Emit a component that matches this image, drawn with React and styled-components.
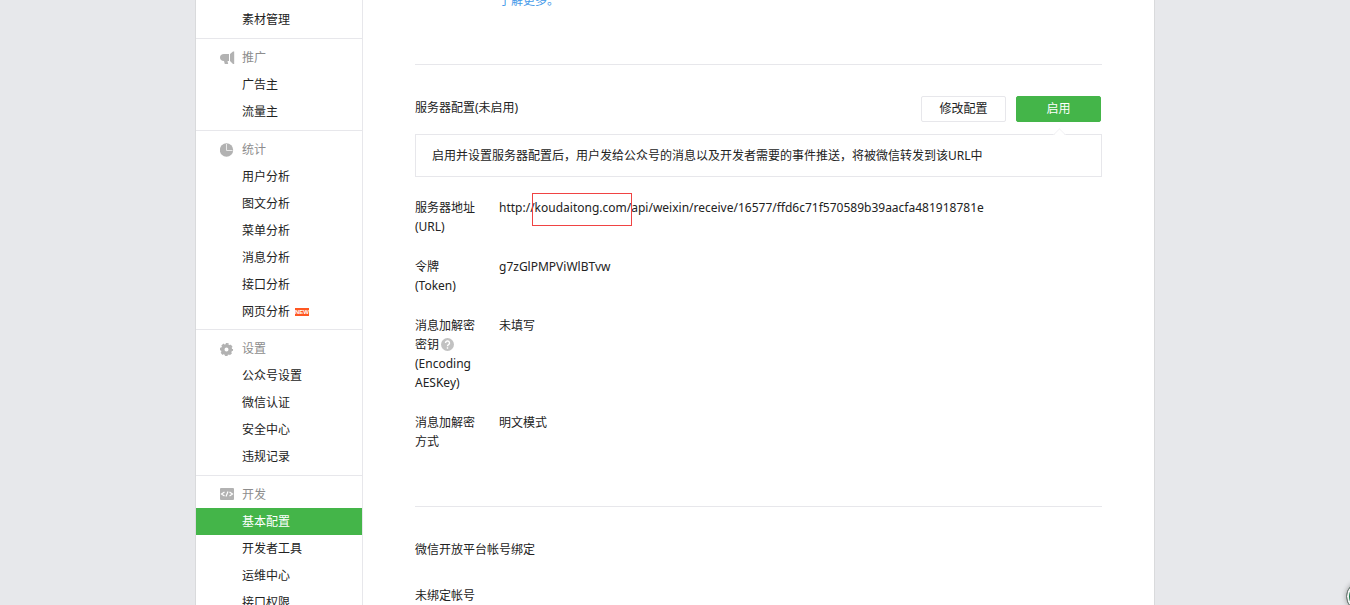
import React from 'react'
import styled, { createGlobalStyle } from 'styled-components'

const GlobalStyle = createGlobalStyle`
    *{
        box-sizing: border-box;
    }
    body{
        margin: 0;
        background: #e7e8eb;
        color: #222;
        font-family: 'Noto Sans', 'Noto Sans CJK SC', sans-serif;
        font-size: 12px;
        line-height: 19px;
    }
    a{
        color: inherit;
        text-decoration: none;
    }
`;

const Page = styled.div`
    height: 100vh;
    overflow: hidden;
    display: flex;
    justify-content: center;
`;

const Container = styled.div`
    display: flex;
    width: 100%;
    max-width: 960px;
    background: #fff;
    border: 1px solid #d9dadc;
    border-width: 0 1px;
`;

const Sidebar = styled.nav`
    flex: 0 0 167px;
    border-right: 1px solid #e7e7eb;
`;

const MenuGroup = styled.section`
    padding: 5px 0 ${props => props.$bottom || 5}px;
    & + &{
        border-top: 1px solid #e7e7eb;
    }
    &:first-child{
        padding-top: 6px;
    }
`;

const MenuTitle = styled.h3`
    display: flex;
    align-items: center;
    gap: 7px;
    height: 27px;
    margin: 0;
    padding-left: 24px;
    color: #8d8d8d;
    font-size: 12px;
    font-weight: normal;
    svg{
        flex: none;
    }
`;

const MenuList = styled.ul`
    list-style: none;
    margin: 0;
    padding: 0;
`;

const MenuLink = styled.a`
    display: flex;
    align-items: center;
    gap: 5px;
    height: 27px;
    padding-left: 46px;
    background: ${props => props.$active ? '#44b549' : 'transparent'};
    && {
        color: ${props => props.$active ? '#fff' : '#222'};
    }
`;

const NewBadge = styled.span`
    width: 14px;
    height: 8px;
    background: #ff5722;
    color: #fff;
    font-family: 'Liberation Sans', sans-serif;
    font-size: 6px;
    font-weight: bold;
    line-height: 8px;
    text-align: center;
`;

const Main = styled.main`
    flex: 1;
    min-width: 0;
    padding: 0 52px;
`;

const Intro = styled.div`
    display: flow-root;
    height: 65px;
    padding-left: 84px;
    border-bottom: 1px solid #e7e7eb;
    a{
        display: block;
        margin-top: -9px;
        color: #459ae9;
    }
`;

const Section = styled.section`
    padding-bottom: 55px;
    border-bottom: 1px solid #e7e7eb;
`;

const SectionHead = styled.div`
    display: flex;
    align-items: center;
    justify-content: space-between;
    padding: 31px 1px 12px 0;
`;

const Title = styled.h2`
    margin: 0 0 3px;
    font-size: 12px;
    font-weight: normal;
`;

const Buttons = styled.div`
    display: flex;
    gap: 10px;
`;

const Button = styled.button`
    width: 85px;
    height: 26px;
    padding: 0 0 2px;
    border: 1px solid ${props => props.$primary ? '#44b549' : '#e7e7eb'};
    border-radius: 2px;
    background: ${props => props.$primary ? '#44b549' : '#fff'};
    color: ${props => props.$primary ? '#fff' : '#222'};
    font: inherit;
    cursor: pointer;
`;

const Notice = styled.p`
    position: relative;
    margin: 0 0 21px;
    padding: 11px 16px;
    border: 1px solid #e7e7eb;
    &::before{
        content: '';
        position: absolute;
        top: -5px;
        right: 37px;
        width: 8px;
        height: 8px;
        border: 1px solid #f4f4f6;
        border-width: 1px 0 0 1px;
        background: linear-gradient(135deg, #fff 50%, transparent 50%);
        transform: rotate(45deg);
    }
`;

const Fields = styled.dl`
    display: grid;
    grid-template-columns: 64px 1fr;
    gap: 21px 20px;
    margin: 0;
    dd{
        margin: 0;
    }
`;

const HelpIcon = styled.svg`
    margin-left: 2px;
    vertical-align: -2px;
`;

const Host = styled.span`
    position: relative;
    &::after{
        content: '';
        position: absolute;
        inset: -6px -5px -10px -3px;
        border: 1px solid #f04343;
    }
`;

const Binding = styled.section`
    padding-top: 33px;
    p{
        margin: 27px 0 0;
    }
`;

const FloatButton = styled.button`
    position: fixed;
    right: -27px;
    bottom: -7px;
    width: 31px;
    height: 31px;
    padding: 0;
    border: 1px solid #777;
    border-radius: 50%;
    background: #1c7a4c;
    box-shadow: inset 0 0 0 2px #f4f4f4, 0 0 5px rgba(0, 0, 0, .3);
`;

const Horn = () => (
    <svg width="15" height="14" viewBox="0 0 15 14" fill="#b2b2b2" aria-hidden="true">
        <path d="M9 3H4C1.500 3 0 4.500 0 6.500S1.500 10 4 10l.8 3h3.400L7.500 10H9z" />
        <path d="M10 3 13 .5h1.200v12.500H13L10 10z" />
    </svg>
)

const Pie = () => (
    <svg width="15" height="14" viewBox="0 0 15 14" aria-hidden="true">
        <circle cx="6.500" cy="7" r="6.700" fill="#b2b2b2" />
        <path d="M6.500 1v6.500h6" fill="none" stroke="#e9e9e9" />
    </svg>
)

const Gear = () => (
    <svg width="15" height="14" viewBox="0 0 15 14" aria-hidden="true">
        <circle cx="6.500" cy="7.500" r="3.800" fill="none" stroke="#b2b2b2" strokeWidth="3.600" />
        <circle cx="6.500" cy="7.500" r="5.800" fill="none" stroke="#b2b2b2" strokeWidth="1.500" strokeDasharray="2.800 1.755" strokeDashoffset="1.400" />
    </svg>
)

const Code = () => (
    <svg width="15" height="14" viewBox="0 0 15 14" aria-hidden="true">
        <rect y="0" width="14" height="12" rx="1" fill="#b2b2b2" />
        <path d="M4.500 4 1.500 6l3 2M9.500 4l3 2-3 2M8 3.500l-2 5" fill="none" stroke="#fff" strokeWidth="1.200" />
    </svg>
)

const menu = [
    { items: ['素材管理'] },
    { title: '推广', icon: <Horn />, items: ['广告主', '流量主'] },
    { title: '统计', icon: <Pie />, bottom: 4, items: ['用户分析', '图文分析', '菜单分析', '消息分析', '接口分析', '网页分析'] },
    { title: '设置', icon: <Gear />, items: ['公众号设置', '微信认证', '安全中心', '违规记录'] },
    { title: '开发', icon: <Code />, items: ['基本配置', '开发者工具', '运维中心', '接口权限'] },
]

function Menu() {
    return (
        <Sidebar>
            {menu.map((group, i) => (
                <MenuGroup key={i} $bottom={group.bottom}>
                    {group.title && <MenuTitle>{group.icon}{group.title}</MenuTitle>}
                    <MenuList>
                        {group.items.map(item => (
                            <li key={item}>
                                <MenuLink href="#" $active={item === '基本配置'}>
                                    {item}
                                    {item === '网页分析' && <NewBadge>NEW</NewBadge>}
                                </MenuLink>
                            </li>
                        ))}
                    </MenuList>
                </MenuGroup>
            ))}
        </Sidebar>
    )
}

export default function App() {
    return (
        <Page>
            <GlobalStyle />
            <Container>
                <Menu />
                <Main>
                    <Intro><a href="#">了解更多。</a></Intro>
                    <Section>
                        <SectionHead>
                            <Title>服务器配置(未启用)</Title>
                            <Buttons>
                                <Button type="button">修改配置</Button>
                                <Button type="button" $primary>启用</Button>
                            </Buttons>
                        </SectionHead>
                        <Notice>启用并设置服务器配置后，用户发给公众号的消息以及开发者需要的事件推送，将被微信转发到该URL中</Notice>
                        <Fields>
                            <dt>服务器地址<br />(URL)</dt>
                            <dd>http://<Host>koudaitong.com</Host>/api/weixin/receive/16577/ffd6c71f570589b39aacfa481918781e</dd>
                            <dt>令牌<br />(Token)</dt>
                            <dd>g7zGlPMPViWlBTvw</dd>
                            <dt>
                                消息加解密<br />密钥
                                <HelpIcon width="13" height="13" viewBox="0 0 13 13" role="img" aria-label="帮助">
                                    <circle cx="6.500" cy="6.500" r="6.500" fill="#c2c2c2" />
                                    <path d="M4.500 5a2 2 0 1 1 3 1.700C6.800 7.100 6.500 7.300 6.500 8.200M6.500 9.200v1.500" fill="none" stroke="#fff" strokeWidth="1.400" />
                                </HelpIcon>
                                <br />(Encoding AESKey)
                            </dt>
                            <dd>未填写</dd>
                            <dt>消息加解密方式</dt>
                            <dd>明文模式</dd>
                        </Fields>
                    </Section>
                    <Binding>
                        <Title>微信开放平台帐号绑定</Title>
                        <p>未绑定帐号</p>
                    </Binding>
                </Main>
            </Container>
            <FloatButton type="button" aria-label="悬浮工具" />
        </Page>
    )
}
